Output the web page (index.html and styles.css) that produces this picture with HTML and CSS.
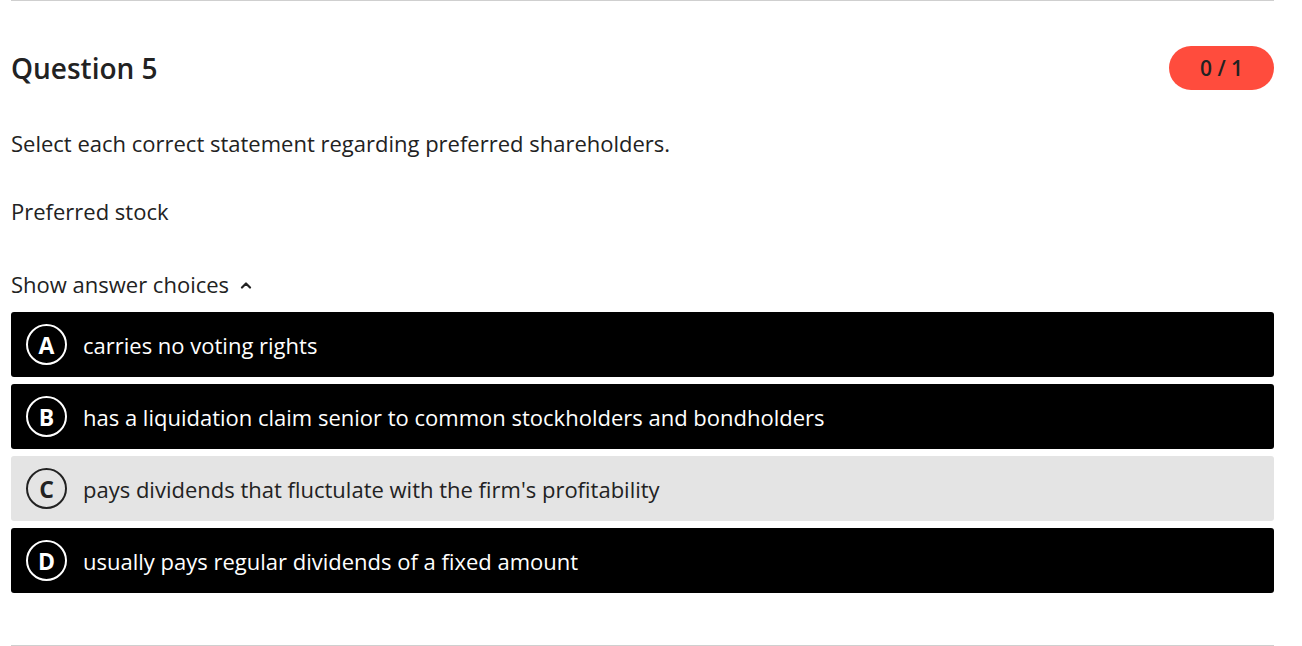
FILE: index.html
```html
<!DOCTYPE html>
<html>
<head>
<meta charset="utf-8">
<link rel="stylesheet" href="styles.css">
</head>
<body>
<div class="page">
  <section class="question">
    <div class="head">
      <h2 class="title">Question 5</h2>
      <span class="score">0 / 1</span>
    </div>
    <p class="prompt">Select each correct statement regarding preferred shareholders.</p>
    <p class="stem">Preferred stock</p>
    <div class="toggle">Show answer choices
      <svg class="chev" width="12" height="8" viewBox="0 0 12 8"><path d="M2 6.5 L6 2.5 L10 6.5" fill="none" stroke="#222" stroke-width="2.2" stroke-linecap="round" stroke-linejoin="round"/></svg>
    </div>
    <div class="choices">
      <div class="choice dark"><span class="letter">A</span><span class="text">carries no voting rights</span></div>
      <div class="choice dark"><span class="letter">B</span><span class="text">has a liquidation claim senior to common stockholders and bondholders</span></div>
      <div class="choice light"><span class="letter">C</span><span class="text">pays dividends that fluctulate with the firm's profitability</span></div>
      <div class="choice dark"><span class="letter">D</span><span class="text">usually pays regular dividends of a fixed amount</span></div>
    </div>
  </section>
</div>
</body>
</html>
```
FILE: styles.css
```css
html, body { margin: 0; padding: 0; background: #fff; }
body { font-family: "Open Sans", "Noto Sans", sans-serif; color: #222; }
.page { width: 1263px; margin-left: 11px; }
.question { border-top: 1px solid #cfcfcf; border-bottom: 1px solid #cfcfcf; padding-top: 45px; padding-bottom: 52px; }
.head { display: flex; justify-content: space-between; align-items: center; height: 44px; }
.title { margin: 0; font-size: 28px; font-weight: 600; color: #222; line-height: 44px; }
.score { background: #ff4c3d; color: #222; font-size: 21px; font-weight: 600; height: 44px; width: 105px; border-radius: 22px; display: flex; align-items: center; justify-content: center; }
.prompt { margin: 0; margin-top: 39px; font-size: 22px; line-height: 28px; }
.stem { margin: 0; margin-top: 40px; font-size: 22px; line-height: 28px; }
.toggle { margin-top: 45px; font-size: 22px; line-height: 28px; display: flex; align-items: center; gap: 11px; }
.chev { margin-top: 2px; }
.choices { margin-top: 14px; display: flex; flex-direction: column; gap: 7px; }
.choice { height: 65px; border-radius: 3px; display: flex; align-items: center; padding-left: 15px; gap: 16px; font-size: 22px; }
.choice.dark { background: #000; color: #fff; }
.choice.light { background: #e4e4e4; color: #222; }
.letter { width: 41px; height: 41px; flex: none; box-sizing: border-box; border-radius: 50%; border: 2.5px solid currentColor; display: flex; align-items: center; justify-content: center; font-weight: 700; font-size: 23px; }
.text { line-height: 28px; }
```
